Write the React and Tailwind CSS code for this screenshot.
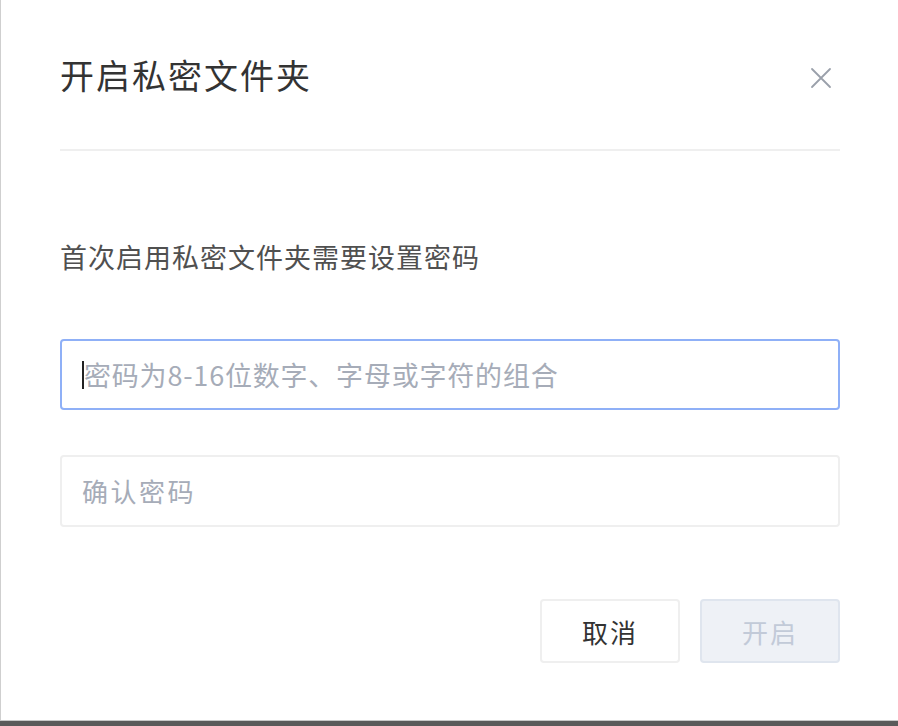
export default function App() {
  const font = { fontFamily: '"Noto Sans CJK SC", "Noto Sans", sans-serif' };
  return (
    <div className="w-[898px] h-[726px] flex flex-col bg-white overflow-hidden" style={font}>
      <div className="flex-1 border-l border-[#cfcfcf] flex flex-col pl-[59px] pr-[58px]">
        <div className="h-[151px] flex items-center justify-between border-b-2 border-[#efefef] pb-[0px]">
          <div className="text-[34px] leading-none text-[#333] tracking-[2px]">开启私密文件夹</div>
          <svg width="22" height="22" viewBox="0 0 22 22" className="mr-[8px] mt-[6px]">
            <path d="M2 2 L20 20 M20 2 L2 20" stroke="#9aa0aa" strokeWidth="1.8" strokeLinecap="round" />
          </svg>
        </div>
        <div className="mt-[92px] text-[27px] leading-none text-[#505050] tracking-[1px]">首次启用私密文件夹需要设置密码</div>
        <div className="mt-[69px] h-[71px] rounded-[4px] border-2 border-[#8fb0f7] flex items-center pl-[20px]">
          <span className="w-[2px] h-[28px] bg-[#222]"></span>
          <span className="text-[27px] leading-none text-[#a6acb8] tracking-[0.8px]">密码为8-16位数字、字母或字符的组合</span>
        </div>
        <div className="mt-[45px] h-[72px] rounded-[4px] border-2 border-[#efefef] flex items-center pl-[20px]">
          <span className="text-[26px] leading-none text-[#a6acb8] tracking-[2.5px]">确认密码</span>
        </div>
        <div className="mt-[72px] flex justify-end gap-[20px]">
          <div className="w-[140px] h-[64px] rounded-[4px] border-2 border-[#efefef] bg-white flex items-center justify-center text-[26px] text-[#333] tracking-[2px]">取消</div>
          <div className="w-[140px] h-[64px] rounded-[4px] border-2 border-[#dfe5ee] bg-[#eef1f6] flex items-center justify-center text-[26px] text-[#c2cad8] tracking-[2px]">开启</div>
        </div>
      </div>
      <div className="h-[1px] bg-[#c8c8c8]"></div>
      <div className="h-[5px] bg-[#5a5a5a]"></div>
    </div>
  );
}
